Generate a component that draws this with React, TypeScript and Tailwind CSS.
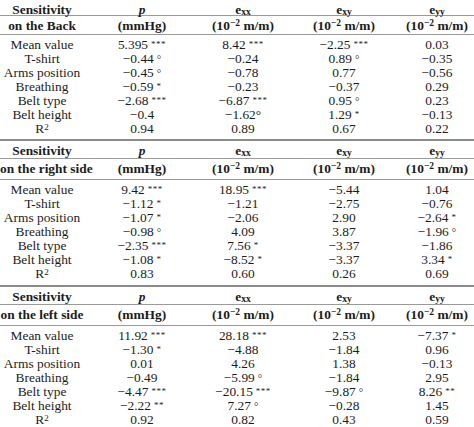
import React from 'react';

type Cell = { v: string; s?: string };
type Row = { label: React.ReactNode; cells: Cell[] };
type Section = { title: string; rows: Row[]; first?: boolean };

const c = (v: string, s?: string): Cell => ({ v, s });

const R2 = (
  <span>
    R<sup className="text-[9px] -top-[3px]">2</sup>
  </span>
);

const sections: Section[] = [
  {
    title: 'on the Back',
    first: true,
    rows: [
      { label: 'Mean value', cells: [c('5.395', '***'), c('8.42', '***'), c('−2.25', '***'), c('0.03')] },
      { label: 'T-shirt', cells: [c('−0.44', '°'), c('−0.24'), c('0.89', '°'), c('−0.35')] },
      { label: 'Arms position', cells: [c('−0.45', '°'), c('−0.78'), c('0.77'), c('−0.56')] },
      { label: 'Breathing', cells: [c('−0.59', '*'), c('−0.23'), c('−0.37'), c('0.29')] },
      { label: 'Belt type', cells: [c('−2.68', '***'), c('−6.87', '***'), c('0.95', '°'), c('0.23')] },
      { label: 'Belt height', cells: [c('−0.4'), c('−1.62°'), c('1.29', '*'), c('−0.13')] },
      { label: R2, cells: [c('0.94'), c('0.89'), c('0.67'), c('0.22')] },
    ],
  },
  {
    title: 'on the right side',
    rows: [
      { label: 'Mean value', cells: [c('9.42', '***'), c('18.95', '***'), c('−5.44'), c('1.04')] },
      { label: 'T-shirt', cells: [c('−1.12', '*'), c('−1.21'), c('−2.75'), c('−0.76')] },
      { label: 'Arms position', cells: [c('−1.07', '*'), c('−2.06'), c('2.90'), c('−2.64', '*')] },
      { label: 'Breathing', cells: [c('−0.98', '°'), c('4.09'), c('3.87'), c('−1.96', '°')] },
      { label: 'Belt type', cells: [c('−2.35', '***'), c('7.56', '*'), c('−3.37'), c('−1.86')] },
      { label: 'Belt height', cells: [c('−1.08', '*'), c('−8.52', '*'), c('−3.37'), c('3.34', '*')] },
      { label: R2, cells: [c('0.83'), c('0.60'), c('0.26'), c('0.69')] },
    ],
  },
  {
    title: 'on the left side',
    rows: [
      { label: 'Mean value', cells: [c('11.92', '***'), c('28.18', '***'), c('2.53'), c('−7.37', '*')] },
      { label: 'T-shirt', cells: [c('−1.30', '*'), c('−4.88'), c('−1.84'), c('0.96')] },
      { label: 'Arms position', cells: [c('0.01'), c('4.26'), c('1.38'), c('−0.13')] },
      { label: 'Breathing', cells: [c('−0.49'), c('−5.99', '°'), c('−1.84'), c('2.95')] },
      { label: 'Belt type', cells: [c('−4.47', '***'), c('−20.15', '***'), c('−9.87', '°'), c('8.26', '**')] },
      { label: 'Belt height', cells: [c('−2.22', '**'), c('7.27', '°'), c('−0.28'), c('1.45')] },
      { label: R2, cells: [c('0.92'), c('0.82'), c('0.43'), c('0.59')] },
    ],
  },
];

const cols = 'grid grid-cols-[84px_116px_86px_116px_70px] items-center text-center whitespace-nowrap';

const Unit = () => (
  <span>
    (10<sup className="text-[9.5px] -top-[4px]">−2</sup> m/m)
  </span>
);

const Strain = ({ sub }: { sub: string }) => (
  <span>
    e<sub className="text-[9.5px] -bottom-[1px]">{sub}</sub>
  </span>
);

const Star = ({ s }: { s: string }) =>
  s === '°' ? (
    <span className="text-[11px] ml-[3px]">°</span>
  ) : (
    <sup className="text-[9px] ml-[3px] -top-[2px] tracking-[0.5px]">{s}</sup>
  );

const TableSection = ({ section }: { section: Section }) => (
  <div className={section.first ? '' : 'border-t-2 border-[#8a8a8a]'}>
    <div className={`${cols} font-bold ${section.first ? 'h-[15px]' : 'h-[17px]'}`}>
      <span>Sensitivity</span>
      <span className="italic">p</span>
      <Strain sub="xx" />
      <Strain sub="xy" />
      <Strain sub="yy" />
    </div>
    <div className={`${cols} font-bold border-t border-b border-[#9a9a9a] ${section.first ? 'h-[20px]' : 'h-[22px]'}`}>
      <span>{section.title}</span>
      <span>(mmHg)</span>
      <Unit />
      <Unit />
      <Unit />
    </div>
    <div className={section.first ? 'pt-[3px] pb-[3px]' : 'pt-[3px] pb-[4px]'}>
      {section.rows.map((row, i) => (
        <div key={i} className={`${cols} h-[14px] leading-[14px]`}>
          <span>{row.label}</span>
          {row.cells.map((cell, j) => (
            <span key={j}>
              {cell.v}
              {cell.s && <Star s={cell.s} />}
            </span>
          ))}
        </div>
      ))}
    </div>
  </div>
);

export default function App() {
  return (
    <div
      className="w-[474px] h-[427px] overflow-hidden bg-white text-[#1c1c1c] text-[13.4px]"
      style={{ fontFamily: '"Liberation Serif", "DejaVu Serif", serif' }}
    >
      {sections.map((s, i) => (
        <TableSection key={i} section={s} />
      ))}
    </div>
  );
}
